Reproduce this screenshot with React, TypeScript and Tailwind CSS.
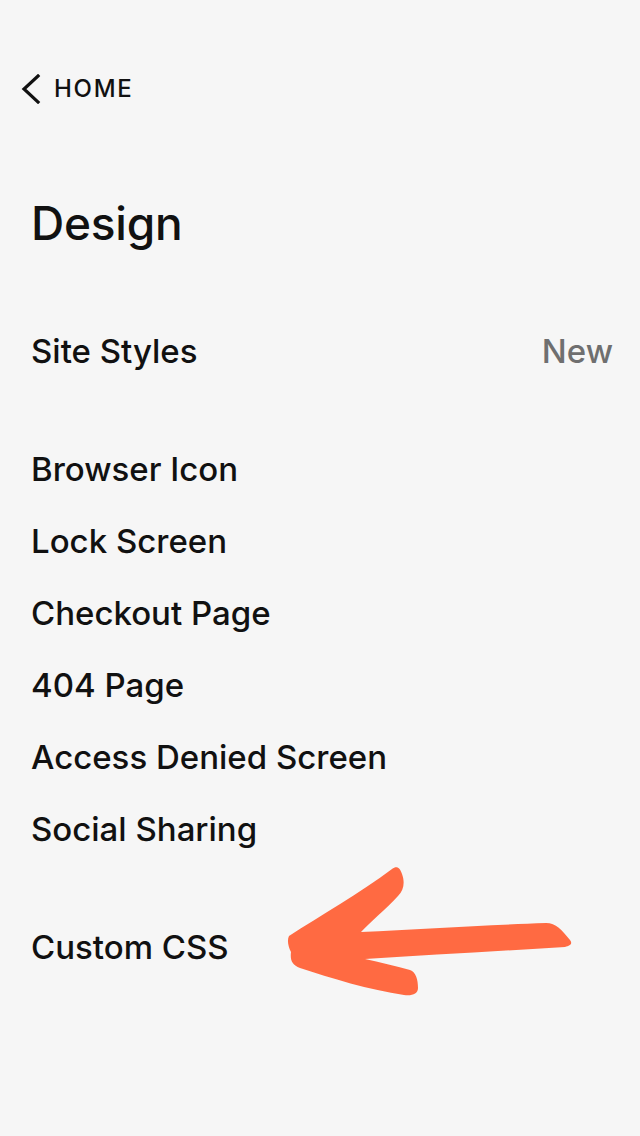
import React from "react"

const items = ["Browser Icon", "Lock Screen", "Checkout Page", "404 Page", "Access Denied Screen", "Social Sharing"]

function Arrow() {
  return (
    <svg
      className="absolute left-0 top-0 pointer-events-none"
      width="640"
      height="1136"
      viewBox="0 0 640 1136"
    >
      <path
        fill="#ff6a42"
        d="M289 936 C 320 916, 360 893, 392 869 C 397 865, 400 868, 402 874 C 405 882, 404 890, 398 896 C 385 910, 370 922, 361 932 C 420 929, 490 925, 546 923 C 556 923, 562 930, 570 940 C 573 944, 570 946, 565 947 C 500 951, 430 955, 365 959 C 380 962, 395 966, 410 970 C 416 972, 418 980, 418 988 C 418 994, 412 996, 404 995 C 370 990, 330 978, 300 968 C 292 965, 290 960, 291 952 C 288 946, 287 940, 289 936 Z"
      />
    </svg>
  )
}

export default function App() {
  return (
    <div
      className="relative w-[640px] h-[1136px] bg-[#f6f6f6] text-[#111111] overflow-hidden"
      style={{ fontFamily: "Inter, 'Noto Sans', sans-serif" }}
    >
      <div className="flex items-center gap-[13px] pl-[20px] pt-[74px] h-[104px]">
        <svg width="21" height="30" viewBox="0 0 21 30" fill="none">
          <path d="M18 2 L4 15 L18 28" stroke="#111" strokeWidth="3.2" strokeLinecap="square" />
        </svg>
        <span className="text-[24px] font-medium tracking-[0.07em] leading-none">HOME</span>
      </div>

      <h1 className="pl-[31px] mt-[96px] text-[46px] font-medium leading-none tracking-[-0.005em]">Design</h1>

      <div className="flex items-center justify-between pl-[31px] pr-[27px] mt-[86px] h-[40px]">
        <span className="text-[33px] font-medium">Site Styles</span>
        <span className="text-[33px] font-medium text-[#6f6f6f]">New</span>
      </div>

      <div className="flex flex-col pl-[31px] mt-[62px]">
        {items.map((t) => (
          <div key={t} className="h-[72px] flex items-center">
            <span className="text-[33px] font-medium">{t}</span>
          </div>
        ))}
      </div>

      <div className="pl-[31px] mt-[46px] h-[72px] flex items-center">
        <span className="text-[33px] font-medium">Custom CSS</span>
      </div>

      <Arrow />
    </div>
  )
}
